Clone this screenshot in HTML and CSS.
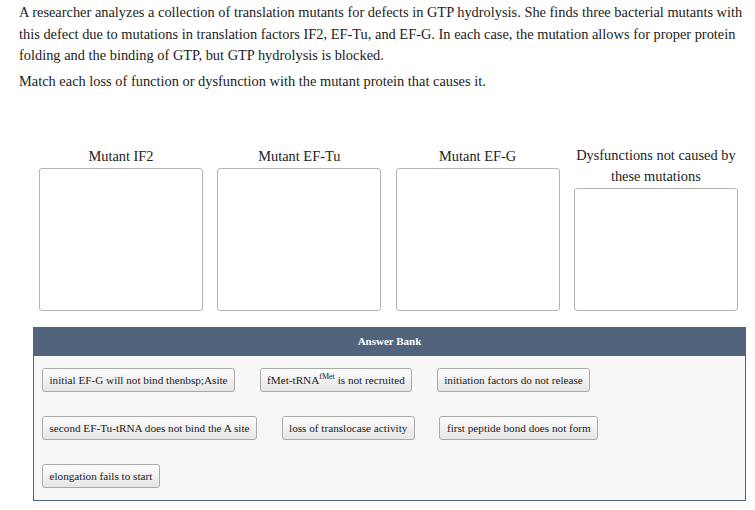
FILE: index.html
```html
<!DOCTYPE html>
<html>
<head>
<meta charset="utf-8">
<link rel="stylesheet" href="styles.css">
</head>
<body>
<div class="page">
  <p class="q">A researcher analyzes a collection of translation mutants for defects in GTP hydrolysis. She finds three bacterial mutants with this defect due to mutations in translation factors IF2, EF-Tu, and EF-G. In each case, the mutation allows for proper protein folding and the binding of GTP, but GTP hydrolysis is blocked.</p>
  <p class="q2">Match each loss of function or dysfunction with the mutant protein that causes it.</p>

  <div class="targets">
    <div class="col"><div class="label">Mutant IF2</div><div class="box"></div></div>
    <div class="col"><div class="label">Mutant EF-Tu</div><div class="box"></div></div>
    <div class="col"><div class="label">Mutant EF-G</div><div class="box"></div></div>
    <div class="col"><div class="label">Dysfunctions not caused by these mutations</div><div class="box short"></div></div>
  </div>

  <div class="bank">
    <div class="bank-head">Answer Bank</div>
    <div class="bank-body">
      <div class="chip">initial EF-G will not bind thenbsp;Asite</div>
      <div class="chip">fMet-tRNA<sup>fMet</sup> is not recruited</div>
      <div class="chip">initiation factors do not release</div>
      <div class="chip">second EF-Tu-tRNA does not bind the A site</div>
      <div class="chip">loss of translocase activity</div>
      <div class="chip">first peptide bond does not form</div>
      <div class="chip">elongation fails to start</div>
    </div>
  </div>
</div>
</body>
</html>
```

FILE: styles.css
```css
* { box-sizing: border-box; }
html, body { margin: 0; padding: 0; background: #fff; }
body {
  font-family: "Liberation Serif", "Times New Roman", serif;
  color: #222;
}
.page {
  padding: 2px 0 0 19px;
  width: 755px;
}
.q, .q2 {
  margin: 0;
  font-size: 14.4px;
  line-height: 21.6px;
  width: 725px;
}
.q2 { margin-top: 4.4px; }
.targets {
  display: grid;
  grid-template-columns: repeat(4, 164px);
  column-gap: 14.3px;
  align-items: end;
  margin: 52px 0 0 20px;
}
.col {
  display: flex;
  flex-direction: column;
  align-items: stretch;
}
.label {
  text-align: center;
  font-size: 14.4px;
  line-height: 21px;
  margin-bottom: 1px;
}
.box {
  height: 143px;
  border: 1px solid #b4b4b4;
  border-radius: 3px;
  background: #fff;
}
.box.short { height: 123px; }
.bank {
  margin: 16px 0 0 14px;
  width: 713px;
  border: 1px solid #51647c;
  border-top: none;
  background: #f7f7f7;
}
.bank-head {
  background: #51647c;
  color: #fff;
  font-weight: bold;
  font-size: 11px;
  height: 29px;
  line-height: 29px;
  text-align: center;
}
.bank-body {
  display: flex;
  flex-wrap: wrap;
  gap: 24px 24.5px;
  padding: 12px 100px 12px 8px;
}
.chip {
  height: 24px;
  line-height: 22px;
  padding: 0 6.5px;
  font-size: 11.2px;
  color: #1a1a1a;
  border: 1px solid #a9a9a9;
  border-radius: 3px;
  background: linear-gradient(#fdfdfd, #e6e6e6);
  white-space: nowrap;
}
.chip sup {
  font-size: 8px;
  line-height: 0;
  vertical-align: 5px;
}
```
